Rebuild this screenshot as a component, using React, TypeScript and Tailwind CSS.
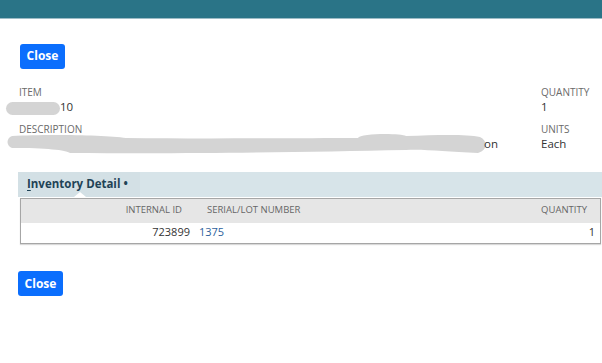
export default function App() {
  return (
    <div className="w-[602px] h-[363px] bg-white overflow-hidden font-['Open_Sans',sans-serif] text-[#333]">
      {/* Header bar */}
      <div className="h-[19px] bg-[#2a7487] border-b border-[#9dbcc6]" />

      <div className="pl-[20px] pt-[23px]">
        <button className="h-[25px] w-[45px] rounded-[3px] bg-[#0b6efd] text-white text-[12px] font-bold leading-none">
          Close
        </button>
      </div>

      {/* Fields */}
      <div className="mt-[16px] grid grid-cols-[1fr_61px] pl-[19px]">
        <div>
          <div className="text-[10px] leading-[14px] text-[#6a6a6a]">ITEM</div>
          <div className="relative text-[11.5px] leading-[16px] h-[16px] pl-[41px]">
            <span className="absolute left-[-13px] top-[3px] h-[13px] w-[54px] rounded-full bg-[#d4d4d4]" />
            10
          </div>
          <div className="mt-[7px] text-[10px] leading-[14px] text-[#6a6a6a]">DESCRIPTION</div>
          <div className="relative flex text-[11.5px] leading-[16px] h-[18px]">
            <svg className="absolute left-[-13px] top-[-3px]" width="484" height="22" viewBox="0 0 484 22">
              <path
                d="M6 3 C 40 1, 100 2, 120 5 C 200 6, 300 5, 352 5 C 354 0, 395 0, 400 3 C 430 2, 460 1, 474 4 C 482 8, 482 17, 472 20 C 440 19, 420 16, 400 17 C 300 19, 200 21, 64 20 C 60 17, 40 15, 6 15 C 0 13, 0 5, 6 3 Z"
                fill="#d4d4d4"
              />
            </svg>
            <span className="ml-[465px] relative">on</span>
          </div>
        </div>
        <div>
          <div className="text-[10px] leading-[14px] text-[#6a6a6a]">QUANTITY</div>
          <div className="text-[11.5px] leading-[16px] h-[16px]">1</div>
          <div className="mt-[7px] text-[10px] leading-[14px] text-[#6a6a6a]">UNITS</div>
          <div className="text-[11.5px] leading-[16px]">Each</div>
        </div>
      </div>

      {/* Inventory detail */}
      <div className="mt-[18px] ml-[18px]">
        <div className="relative h-[25px] flex bg-[#d7e4e9]">
          <div className="relative h-full w-[122px] pl-[9px] flex items-center bg-[#d3e0e5] text-[11.5px] font-bold text-[#1f4356]">
            <span>
              <span className="underline underline-offset-2">I</span>nventory Detail •
            </span>
            <span className="absolute left-[56px] bottom-0 w-0 h-0 border-l-[6px] border-r-[6px] border-b-[5px] border-l-transparent border-r-transparent border-b-white" />
          </div>
        </div>
        <div className="mt-px ml-[2px] mr-px border border-[#a6a6a6] shadow-[0_1px_1px_rgba(0,0,0,0.15)]">
          <div className="grid grid-cols-[169px_1fr_120px] h-[24px] items-center bg-[#e6e6e6] text-[9.5px] text-[#666]">
            <div className="text-right pr-[8px]">INTERNAL ID</div>
            <div className="pl-[17px]">SERIAL/LOT NUMBER</div>
            <div className="text-right pr-[13px]">QUANTITY</div>
          </div>
          <div className="grid grid-cols-[169px_1fr_120px] h-[20px] items-center bg-white text-[11px] text-[#333]">
            <div className="text-right">723899</div>
            <div className="pl-[9px] text-[#2d5f9c]">1375</div>
            <div className="text-right pr-[5px]">1</div>
          </div>
        </div>
      </div>

      <div className="pl-[18px] pt-[26px]">
        <button className="h-[25px] w-[45px] rounded-[3px] bg-[#0b6efd] text-white text-[12px] font-bold leading-none">
          Close
        </button>
      </div>
    </div>
  );
}
